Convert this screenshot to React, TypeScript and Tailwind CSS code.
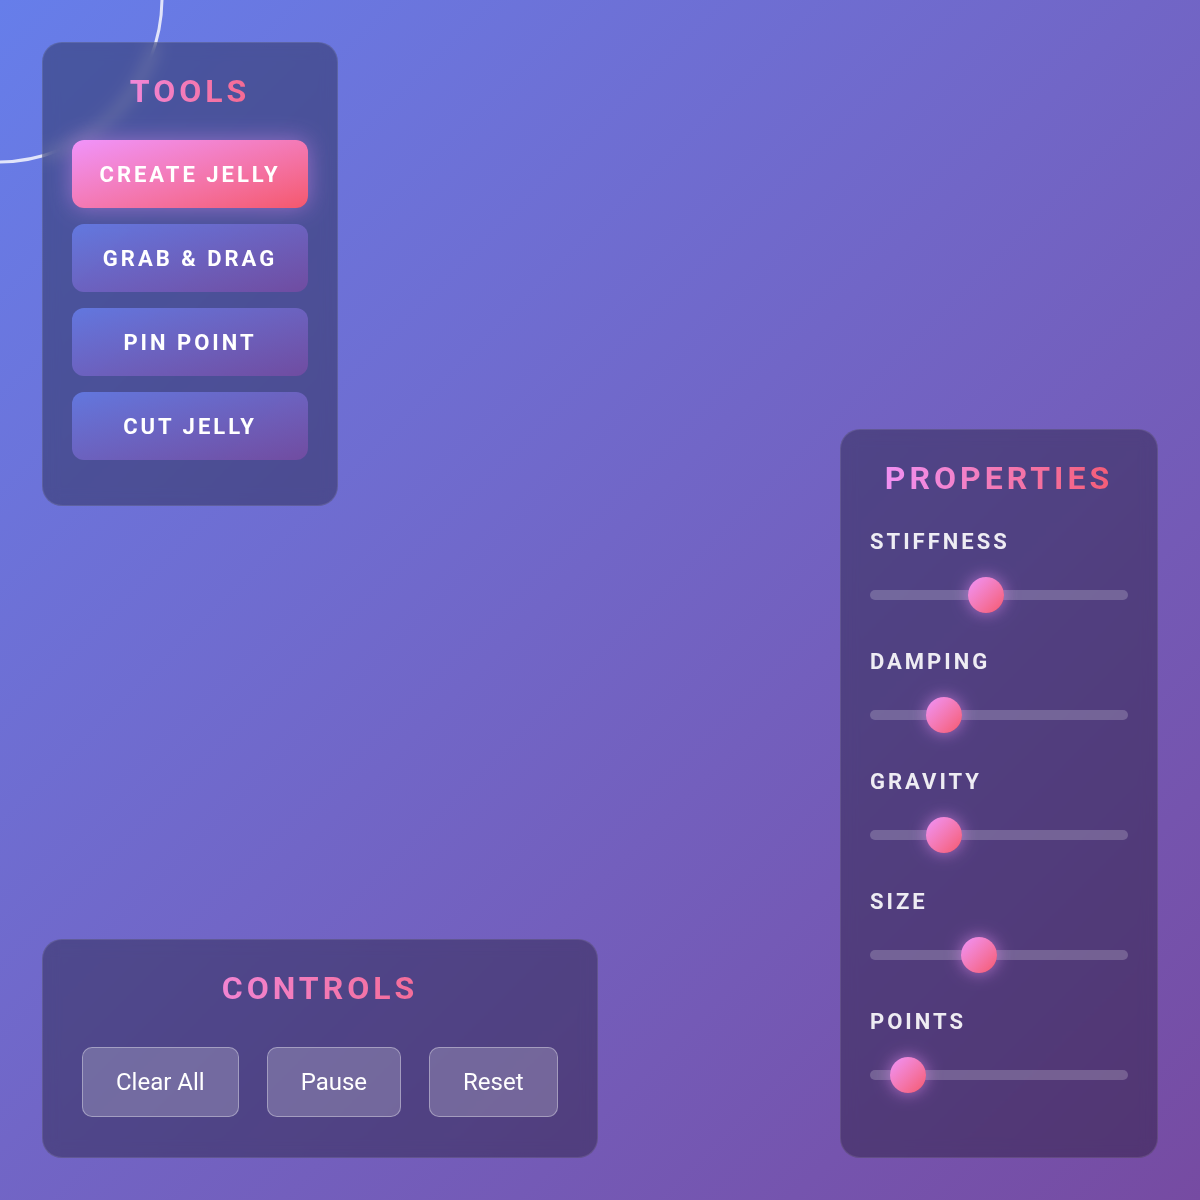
import React, { useState } from 'react';

const FONT = { fontFamily: 'Roboto, "Noto Sans", sans-serif' };

const TOOLS = ['CREATE JELLY', 'GRAB & DRAG', 'PIN POINT', 'CUT JELLY'];

const PROPS = [
  { name: 'STIFFNESS', value: 0.44 },
  { name: 'DAMPING', value: 0.25 },
  { name: 'GRAVITY', value: 0.25 },
  { name: 'SIZE', value: 0.41 },
  { name: 'POINTS', value: 0.09 },
];

const Title: React.FC<{ children: React.ReactNode; className?: string }> = ({ children, className }) => (
  <h2
    className={`text-center text-[32px] leading-[38px] font-bold tracking-[4px] bg-gradient-to-r from-[#f093fb] to-[#f5576c] bg-clip-text text-transparent ${className ?? ''}`}
  >
    {children}
  </h2>
);

const Slider: React.FC<{ value: number }> = ({ value }) => (
  <div className="relative h-9 flex items-center">
    <div className="w-full h-[10px] rounded-full bg-white/20" />
    {/* thumb centre runs from 18px to (width - 18px) */}
    <div
      className="absolute top-0 w-9 h-9 rounded-full bg-gradient-to-br from-[#f093fb] to-[#f5576c] shadow-[0_0_16px_rgba(240,147,251,0.6)]"
      style={{ left: `calc(${value} * (100% - 36px))` }}
    />
  </div>
);

const App: React.FC = () => {
  const [tool, setTool] = useState(0);

  return (
    <div
      className="relative w-[1200px] h-[1200px] overflow-hidden bg-gradient-to-br from-[#667eea] to-[#764ba2] p-[42px] flex justify-between"
      style={FONT}
    >
      {/* jelly outline drawn on the canvas */}
      <svg className="absolute left-0 top-0" width="240" height="240" viewBox="0 0 240 240">
        <circle cx="-2" cy="-2" r="164" fill="none" stroke="rgba(255,255,255,0.8)" strokeWidth="3" />
      </svg>

      <div className="flex flex-col justify-between">
        <div className="relative w-[296px] rounded-[20px] border border-white/10 bg-black/30 backdrop-blur-sm px-[29px] pt-[29px] pb-[45px]">
          <Title className="mb-[30px]">TOOLS</Title>
          <div className="flex flex-col gap-4">
            {TOOLS.map((t, i) => (
              <button
                key={t}
                onClick={() => setTool(i)}
                className={`h-[68px] rounded-xl text-white text-[22px] font-bold tracking-[3px] ${
                  tool === i
                    ? 'bg-gradient-to-br from-[#f093fb] to-[#f5576c] shadow-[0_0_22px_rgba(240,147,251,0.45)]'
                    : 'bg-gradient-to-br from-[#667eea]/85 to-[#764ba2]/85'
                }`}
              >
                {t}
              </button>
            ))}
          </div>
        </div>

        <div className="relative w-[556px] rounded-[20px] border border-white/10 bg-black/30 backdrop-blur-sm px-[39px] pt-[29px] pb-[40px]">
          <Title className="mb-[40px]">CONTROLS</Title>
          <div className="flex gap-7">
            {['Clear All', 'Pause', 'Reset'].map((b) => (
              <button
                key={b}
                className="h-[70px] px-[33px] rounded-[10px] border border-white/35 bg-white/20 text-white text-[24px]"
              >
                {b}
              </button>
            ))}
          </div>
        </div>
      </div>

      <div className="flex flex-col justify-end">
        <div className="relative w-[318px] rounded-[20px] border border-white/10 bg-black/30 backdrop-blur-sm px-[29px] pt-[29px] pb-[64px]">
          <Title className="mb-[32px]">PROPERTIES</Title>
          <div className="flex flex-col gap-9">
            {PROPS.map((p) => (
              <div key={p.name}>
                <div className="text-white/90 text-[22px] leading-[26px] font-bold tracking-[3px] mb-[22px]">{p.name}</div>
                <Slider value={p.value} />
              </div>
            ))}
          </div>
        </div>
      </div>
    </div>
  );
};

export default App;
